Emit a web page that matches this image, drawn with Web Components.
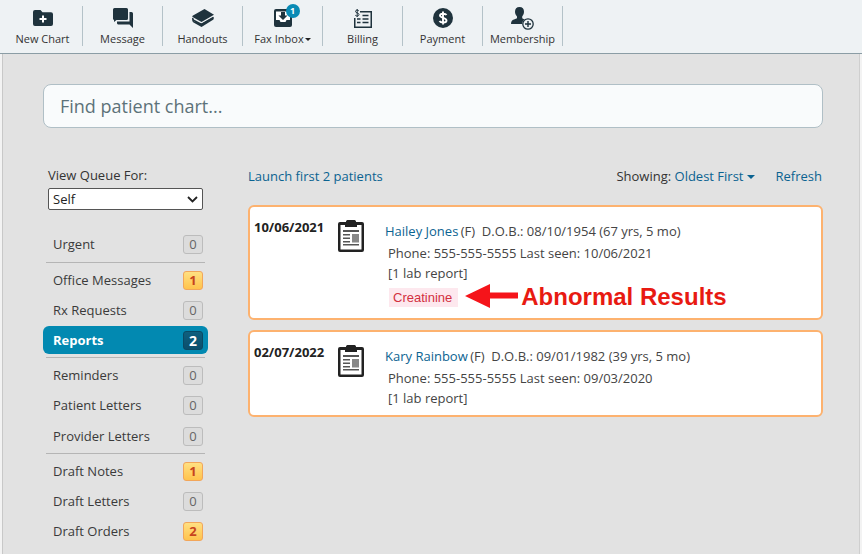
<!DOCTYPE html>
<html><head><meta charset="utf-8"><style>
html,body{margin:0;padding:0;width:862px;height:554px;overflow:hidden;background:#e2e2e2;font-family:"Open Sans",sans-serif;color:#333}
</style></head><body>
<app-shell></app-shell>
<script>
const D='#1f333d';
const ICONS={
folder:`<svg width="20" height="16" viewBox="0 0 20 16"><path fill="${D}" d="M2 0h5.500l2 2.300H18a2 2 0 0 1 2 2V14a2 2 0 0 1-2 2H2a2 2 0 0 1-2-2V2a2 2 0 0 1 2-2z"/><path fill="#fff" d="M9 5.500h2V8h2.500v2H11v2.500H9V10H6.500V8H9z"/></svg>`,
msg:`<svg width="20" height="20" viewBox="0 0 20 20"><path fill="${D}" d="M1.500 0h12A1.500 1.500 0 0 1 15 1.500v9a1.500 1.500 0 0 1-1.500 1.500H3.500L1 14v-2A1.500 1.500 0 0 1 0 10.500v-9A1.500 1.500 0 0 1 1.500 0z"/><path fill="${D}" d="M16.500 4h2A1.500 1.500 0 0 1 20 5.500V20l-3.500-3.500H6A1.500 1.500 0 0 1 4 15v-1h1v1h10.500a1 1 0 0 0 1-1z"/><path fill="${D}" d="M4 13.500h13v1.500H4z"/></svg>`,
book:`<svg width="22" height="18" viewBox="0 0 22 18"><path fill="${D}" d="M12.500 0L22 5.800 9.500 13 1 8.300C0 7.700 0 7 1 6.500z"/><path fill="none" stroke="${D}" stroke-width="1.600" d="M21.500 8.500L9.500 15.500 2 11.500C.8 10.800.6 9.800 1 9"/><path fill="${D}" d="M9.500 14.500l12-6.500v2.500L9.500 18 1.500 13.500c-1.200-.8-1.500-2-.8-3l1 .8c-.3.5 0 1 .6 1.300z"/></svg>`,
fax:`<svg width="18" height="18" viewBox="0 0 18 18"><path fill="${D}" d="M2 0h14a2 2 0 0 1 2 2v14a2 2 0 0 1-2 2H2a2 2 0 0 1-2-2V2a2 2 0 0 1 2-2z"/><path fill="#fff" d="M2 2.500h14v8.500h-3.500l-1 2h-5l-1-2H2z"/><path fill="${D}" d="M7 3h4v3.500h2.500L9 11 4.500 6.500H7z"/></svg>`,
bill:`<svg width="18" height="19" viewBox="0 0 18 19"><path fill="none" stroke="${D}" stroke-width="1" d="M4.800 1.800C3.800 .8 1.500 .8 1.500 2.500s3.500 1.200 3.500 3-2.500 2-3.700 .8M3.200 0v8"/><path fill="${D}" d="M6 2h12v17H0V9h1.500v8.500h15V3.500H6z"/><path stroke="${D}" stroke-width="1.700" d="M8.500 6.500h6M8.500 10h6M8.500 13.500h6M3 10h3.500M3 13.500h3.500"/></svg>`,
pay:`<svg width="20" height="20" viewBox="0 0 20 20"><circle cx="10" cy="10" r="10" fill="${D}"/><path fill="none" stroke="#fff" stroke-width="1.900" d="M13.500 7C12.500 5.300 7 5 7 7.600s6.500 2 6.500 4.800-5.800 2.500-7 .6M10 3.500v13"/></svg>`,
mem:`<svg width="23" height="23" viewBox="0 0 23 23"><path fill="${D}" d="M8.500 0c3 0 4.500 2 4.500 4.800 0 2-1 3.700-1.800 4.700v1.800l2.300 1.200c-1.500 1-2.300 2.500-2.300 4.500H0c0-3 1-3.800 3-4.500l3-1.200V9.500C5 8.500 4 6.800 4 4.800 4 2 5.500 0 8.500 0z"/><circle cx="17" cy="17" r="5.200" fill="none" stroke="${D}" stroke-width="1.300"/><path stroke="${D}" stroke-width="1.400" d="M17 14v6M14 17h6"/></svg>`,
clip:'<svg width="26" height="32" viewBox="0 0 26 32"><path fill="#222" d="M2 2h6V1.500C8 .5 9 0 10 0h6c1 0 2 .5 2 1.500V2h6a2 2 0 0 1 2 2v26a2 2 0 0 1-2 2H2a2 2 0 0 1-2-2V4a2 2 0 0 1 2-2z"/><path fill="#fff" d="M2.500 5H7v2h12V5h4.500v24.500h-21z"/><path fill="#555" d="M5 10h16v2H5zM5 14h7v1.600H5zM5 17.500h7v1.600H5zM5 21h7v1.600H5zM5 24h16v1.600H5z"/><path fill="#888" d="M14 14h7v8.500h-7z"/></svg>'
};
function el(name,html,css){customElements.define(name,class extends HTMLElement{
 connectedCallback(){if(this.shadowRoot)return;const r=this.attachShadow({mode:'open'});r.innerHTML='<style>'+css+'</style>'+(typeof html==='function'?html(this):html)}
})}
el('tool-btn',h=>`<div class="i">${ICONS[h.getAttribute('icon')]}<slot name="badge"></slot></div><div class="l"><slot></slot></div>`,`
:host{display:flex;flex-direction:column;align-items:center;width:80px;box-sizing:border-box;height:40px;margin-top:6px;border-right:1px solid #b4c2c8;font-size:11px;color:#333;line-height:14px;position:relative}
.i{height:24px;display:flex;align-items:center;justify-content:center;position:relative}
svg{display:block}
.l{white-space:nowrap;margin-top:2px}
`);
el('fax-badge','<slot></slot>',`:host{position:absolute;top:-2px;left:12px;width:14px;height:14px;border-radius:50%;background:#0a8bb5;color:#fff;font-size:9px;font-weight:700;line-height:14px;text-align:center}`);
el('tool-bar','<slot></slot>',`:host{display:flex;height:53px;background:#eef2f4;border-bottom:1px solid #8b9da5;padding-left:3px}`);
el('search-box','<div>Find patient chart...</div>',`:host{display:block;height:42px;margin:30px 39px 0 43px;border:1px solid #b0bfc6;border-radius:8px;background:#f9fbfc;color:#5d7279;font-size:18px;line-height:42px;padding-left:16px}`);
el('side-item',h=>`<span class="n"><slot></slot></span><span class="b ${h.getAttribute('kind')||''}">${h.getAttribute('count')}</span>`,`
:host{display:flex;align-items:center;justify-content:space-between;height:28px;padding:0 2px 0 7px;font-size:13px;color:#3a3a3a;border-radius:6px}
:host([active]){background:#0289b1;color:#fff;font-weight:700;padding:0 5px 0 10px;margin:0 -3px}
:host([late]){margin-top:1px}
.b{width:20px;height:19px;box-sizing:border-box;border:1px solid #bcbcbc;border-radius:3px;background:#dcdcdc;color:#666;font-size:13px;line-height:17px;text-align:center;font-weight:400}
.warn{background:linear-gradient(#ffe082,#ffc34d);border-color:#f2a65a;color:#c8431e;font-weight:700}
.dark{background:linear-gradient(#0f5f7e,#0b4f6c);border-color:#0a4a64;color:#fff;font-weight:700;font-size:14px}
`);
el('side-group','<slot></slot>',`:host{display:flex;flex-direction:column;gap:2px;padding:3px 0;border-bottom:1px solid #b5b5b5;margin:0 3px}:host(:first-child){padding-bottom:4px}:host(:last-child){border:0}`);
el('side-bar',`<div class="q">View Queue For:</div><div class="s">Self<svg width="11" height="7" viewBox="0 0 11 7"><path d="M1 1l4.500 4.500L10 1" fill="none" stroke="#222" stroke-width="1.800"/></svg></div><div class="g"><slot></slot></div>`,`
:host{display:block;width:165px;font-size:13px;color:#333}
.q{padding-left:5px;line-height:18px}
.s{margin:4px 5px 0;height:22px;box-sizing:border-box;border:1px solid #555;border-radius:2px;background:#fff;line-height:20px;padding:0 4px;display:flex;justify-content:space-between;align-items:center;color:#222}
.g{margin-top:17px}`);
el('chart-card',h=>`<div class="d">${h.getAttribute('date')}</div><div class="ic">${ICONS.clip}</div><div class="m"><div class="t"><a>${h.getAttribute('name')}</a> <span>(F)&nbsp; D.O.B.: ${h.getAttribute('dob')}</span></div><div class="x">Phone: 555-555-5555 Last seen: ${h.getAttribute('seen')}</div><div class="x r">[1 lab report]</div><slot></slot></div>`,`
:host{display:flex;box-sizing:border-box;border:2px solid #fdb26f;border-radius:6px;background:#fff;font-size:13px;color:#444}
.d{width:84px;font-weight:700;color:#222;margin:11px 0 0 4px;line-height:18px}
.ic{margin-top:13px;width:47px}
.m{padding-top:14px;flex:1}
.t{line-height:20px}.t span{margin-left:-1px}a{color:#0b6391}
.x{padding-left:3px;line-height:20px;margin-top:2px}
.r{margin-top:0}`);
el('abn-tag','<span class="c">Creatinine</span><svg width="53" height="26" viewBox="0 0 53 26"><path fill="#f5141a" d="M0 13L25 1v8.500h28v6H25V25z"/></svg><span class="a">Abnormal Results</span>',`
:host{display:flex;align-items:center;margin:5px 0 0 4px;height:19px;font-family:"Liberation Sans",sans-serif}
.c{background:#fde8ee;color:#d3303f;font-size:13px;padding:0 6px 0 4px;line-height:19px}
svg{margin:-4px 3px 0 7px;flex:none}
.a{color:#e81a12;font-size:24px;font-weight:700;white-space:nowrap;line-height:19px;margin-top:-3px}`);
el('queue-head',`<a>Launch first 2 patients</a><span class="sp"></span><span>Showing: <a>Oldest First<i></i></a></span><a class="rf">Refresh</a>`,`
:host{display:flex;font-size:13px;line-height:18px;color:#333;height:18px;padding-right:1px}
a{color:#0b6391}.sp{flex:1}.rf{margin-left:21px}
i{display:inline-block;border:4px solid transparent;border-top-color:#0b6391;border-bottom:0;vertical-align:2px;margin-left:3px}`);
el('queue-main','<slot></slot>',`:host{display:flex;flex-direction:column;flex:1;min-width:0;padding-top:1px}`);
el('app-body','<slot></slot>',`:host{display:flex;margin:38px 39px 0 43px;gap:40px}`);
el('app-shell',`
<tool-bar>
<tool-btn icon="folder">New Chart</tool-btn><tool-btn icon="msg">Message</tool-btn><tool-btn icon="book">Handouts</tool-btn>
<tool-btn icon="fax"><fax-badge slot="badge">1</fax-badge>Fax Inbox<span style="display:inline-block;border:3px solid transparent;border-top-color:#222;border-bottom:0;vertical-align:2px;margin-left:1px"></span></tool-btn>
<tool-btn icon="bill">Billing</tool-btn><tool-btn icon="pay">Payment</tool-btn><tool-btn icon="mem">Membership</tool-btn>
</tool-bar>
<search-box></search-box>
<app-body>
<side-bar>
<side-group><side-item count="0">Urgent</side-item></side-group>
<side-group><side-item count="1" kind="warn">Office Messages</side-item><side-item count="0">Rx Requests</side-item><side-item count="2" kind="dark" active>Reports</side-item></side-group>
<side-group><side-item count="0">Reminders</side-item><side-item count="0">Patient Letters</side-item><side-item count="0" late>Provider Letters</side-item></side-group>
<side-group><side-item count="1" kind="warn">Draft Notes</side-item><side-item count="0">Draft Letters</side-item><side-item count="2" kind="warn">Draft Orders</side-item></side-group>
</side-bar>
<queue-main>
<queue-head></queue-head>
<chart-card style="height:115px;margin-top:20px" date="10/06/2021" name="Hailey Jones" dob="08/10/1954 (67 yrs, 5 mo)" seen="10/06/2021"><abn-tag></abn-tag></chart-card>
<chart-card style="height:87px;margin-top:10px" date="02/07/2022" name="Kary Rainbow" dob="09/01/1982 (39 yrs, 5 mo)" seen="09/03/2020"></chart-card>
</queue-main>
</app-body>`,`:host{display:block;height:554px;box-sizing:border-box;position:relative;overflow:hidden}
:host::before{content:"";position:absolute;left:0;top:54px;bottom:0;width:2px;background:#f3f3f3;border-right:1px solid #c8c8c8}
:host::after{content:"";position:absolute;right:0;top:54px;bottom:0;width:2px;background:#f3f3f3;border-left:1px solid #cfcfcf}`);
</script>
</body></html>
